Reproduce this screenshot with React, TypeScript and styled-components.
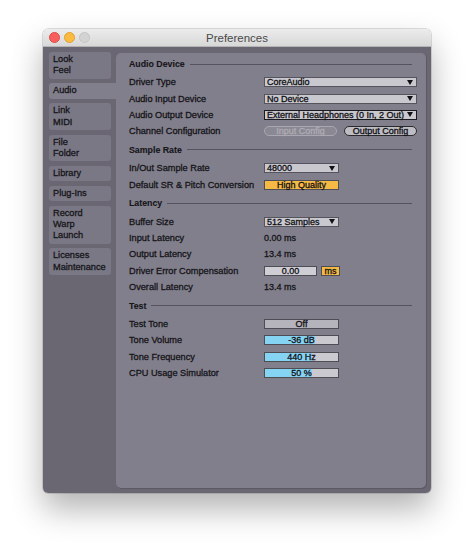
import React from "react";
import styled, { createGlobalStyle } from "styled-components";

const Global = createGlobalStyle`
  html, body { margin: 0; padding: 0; background: #ffffff; }
  body { width: 474px; height: 551px; overflow: hidden; font-family: "Liberation Sans", Arial, sans-serif; }
  * { box-sizing: border-box; }
`;

const Page = styled.div`
  padding: 29px 0 0 43px;
`;

const Window = styled.div`
  width: 388px;
  height: 464px;
  border-radius: 5px;
  overflow: hidden;
  display: flex;
  flex-direction: column;
  box-shadow: 0 16px 32px rgba(0, 0, 0, 0.3), 0 0 0 0.5px rgba(0, 0, 0, 0.25);
`;

const TitleBar = styled.div`
  height: 18px;
  flex: none;
  position: relative;
  display: flex;
  align-items: center;
  justify-content: center;
  background: linear-gradient(#ececec, #d8d8d8);
  border-bottom: 1px solid #b4b4b4;
`;

const Lights = styled.div`
  position: absolute;
  left: 6px;
  top: 3px;
  display: flex;
  gap: 4px;
`;

const Light = styled.span<{ $c: string; $b: string }>`
  width: 11px;
  height: 11px;
  border-radius: 50%;
  background: ${(p) => p.$c};
  border: 0.5px solid ${(p) => p.$b};
`;

const Title = styled.div`
  font-family: "Liberation Sans", Arial, sans-serif;
  font-size: 11.5px;
  color: #4a4a4a;
`;

const Body = styled.div`
  flex: 1;
  display: flex;
  padding: 5px 5px 5px 6px;
  background: #6a6772;
  -webkit-text-stroke: 0.3px;
`;

const Sidebar = styled.div`
  width: 62px;
  flex: none;
  display: flex;
  flex-direction: column;
  gap: 4.7px;
  margin-right: 5px;
`;

const Tab = styled.div<{ $active?: boolean }>`
  position: relative;
  z-index: 1;
  padding: 2px 4px;
  font-size: 9.2px;
  line-height: 11.3px;
  color: #16151a;
  background: ${(p) => (p.$active ? "#817f8b" : "#7a7884")};
  border-radius: ${(p) => (p.$active ? "3px 0 0 3px" : "3px")};
  margin-right: ${(p) => (p.$active ? "-7px" : "0")};
`;

const Panel = styled.div`
  flex: 1;
  margin-top: 1px;
  background: #817f8b;
  border-radius: 5px;
  box-shadow: 1px 1px 0 #5c5964;
  padding: 5px 9px 0 13px;
  display: flex;
  flex-direction: column;
`;

const Section = styled.div`
  display: flex;
  flex-direction: column;
  & + & {
    margin-top: 4.6px;
  }
`;

const Header = styled.div`
  height: 12px;
  display: flex;
  align-items: center;
  gap: 5px;
  margin-bottom: 4.2px;
  padding-right: 5px;
  font-size: 8.8px;
  font-weight: bold;
  color: #16151a;
  -webkit-text-stroke: 0.1px;
`;

const HeaderLine = styled.div`
  flex: 1;
  height: 1px;
  background: #56535e;
`;

const Row = styled.div`
  height: 16.3px;
  display: grid;
  grid-template-columns: 135px 1fr;
  align-items: center;
  font-size: 9.2px;
  color: #16151a;
`;

const Label = styled.div`
  white-space: nowrap;
`;

const Controls = styled.div`
  display: flex;
  align-items: center;
  gap: 4px;
`;

const Select = styled.div<{ $w: number; $focus?: boolean }>`
  width: ${(p) => p.$w}px;
  height: 10px;
  display: flex;
  align-items: center;
  justify-content: space-between;
  padding: 0 3px 0 2px;
  background: #c9c8ce;
  border: 1px solid ${(p) => (p.$focus ? "#1c1b20" : "#55535b")};
  font-size: 9px;
  line-height: 8px;
  color: #111014;
  white-space: nowrap;
`;

const Arrow = styled.span`
  width: 0;
  height: 0;
  border-left: 3.5px solid transparent;
  border-right: 3.5px solid transparent;
  border-top: 5px solid #111014;
`;

const Pill = styled.div<{ $disabled?: boolean }>`
  width: 73px;
  height: 10px;
  border-radius: 5px;
  display: flex;
  align-items: center;
  justify-content: center;
  font-size: 9px;
  background: ${(p) => (p.$disabled ? "#8a8893" : "#bebdc4")};
  border: 1px solid ${(p) => (p.$disabled ? "#a9a7b1" : "#2a292e")};
  color: ${(p) => (p.$disabled ? "#aeacb6" : "#111014")};
  & + & {
    margin-left: 3px;
  }
`;

const Box = styled.div<{ $w: number; $bg: string }>`
  width: ${(p) => p.$w}px;
  height: 10px;
  display: flex;
  align-items: center;
  justify-content: center;
  font-size: 9px;
  color: #111014;
  background: ${(p) => p.$bg};
  border: 1px solid #4e4c55;
`;

const Slider = styled.div`
  position: relative;
  width: 75px;
  height: 10px;
  background: #cac9cf;
  border: 1px solid #4e4c55;
  overflow: hidden;
`;

const Fill = styled.div`
  position: absolute;
  left: 0;
  top: 0;
  bottom: 0;
  background: #86d4f4;
`;

const SliderText = styled.div`
  position: relative;
  height: 100%;
  display: flex;
  align-items: center;
  justify-content: center;
  font-size: 9px;
  color: #111014;
`;

const Value = styled.div`
  font-size: 9px;
  color: #16151a;
`;

const tabs: { lines: string[]; active?: boolean }[] = [
  { lines: ["Look", "Feel"] },
  { lines: ["Audio"], active: true },
  { lines: ["Link", "MIDI"] },
  { lines: ["File", "Folder"] },
  { lines: ["Library"] },
  { lines: ["Plug-Ins"] },
  { lines: ["Record", "Warp", "Launch"] },
  { lines: ["Licenses", "Maintenance"] },
];

const Slide = ({ pct, text }: { pct: number; text: string }) => (
  <Slider>
    <Fill style={{ width: `${pct}%` }} />
    <SliderText>{text}</SliderText>
  </Slider>
);

export default function App() {
  return (
    <>
      <Global />
      <Page>
        <Window>
          <TitleBar>
            <Lights>
              <Light $c="#fc605c" $b="#de4a45" />
              <Light $c="#fdbc40" $b="#dea032" />
              <Light $c="#d3d3d3" $b="#c4c4c4" />
            </Lights>
            <Title>Preferences</Title>
          </TitleBar>
          <Body>
            <Sidebar>
              {tabs.map((t, i) => (
                <Tab key={i} $active={t.active}>
                  {t.lines.map((l) => (
                    <div key={l}>{l}</div>
                  ))}
                </Tab>
              ))}
            </Sidebar>
            <Panel>
              <Section>
                <Header>
                  Audio Device
                  <HeaderLine />
                </Header>
                <Row>
                  <Label>Driver Type</Label>
                  <Controls>
                    <Select $w={153}>
                      CoreAudio
                      <Arrow />
                    </Select>
                  </Controls>
                </Row>
                <Row>
                  <Label>Audio Input Device</Label>
                  <Controls>
                    <Select $w={153}>
                      No Device
                      <Arrow />
                    </Select>
                  </Controls>
                </Row>
                <Row>
                  <Label>Audio Output Device</Label>
                  <Controls>
                    <Select $w={153} $focus>
                      External Headphones (0 In, 2 Out)
                      <Arrow />
                    </Select>
                  </Controls>
                </Row>
                <Row>
                  <Label>Channel Configuration</Label>
                  <Controls>
                    <Pill $disabled>Input Config</Pill>
                    <Pill>Output Config</Pill>
                  </Controls>
                </Row>
              </Section>

              <Section>
                <Header>
                  Sample Rate
                  <HeaderLine />
                </Header>
                <Row>
                  <Label>In/Out Sample Rate</Label>
                  <Controls>
                    <Select $w={75}>
                      48000
                      <Arrow />
                    </Select>
                  </Controls>
                </Row>
                <Row>
                  <Label>Default SR &amp; Pitch Conversion</Label>
                  <Controls>
                    <Box $w={75} $bg="#f5b945">
                      High Quality
                    </Box>
                  </Controls>
                </Row>
              </Section>

              <Section>
                <Header>
                  Latency
                  <HeaderLine />
                </Header>
                <Row>
                  <Label>Buffer Size</Label>
                  <Controls>
                    <Select $w={75}>
                      512 Samples
                      <Arrow />
                    </Select>
                  </Controls>
                </Row>
                <Row>
                  <Label>Input Latency</Label>
                  <Value>0.00 ms</Value>
                </Row>
                <Row>
                  <Label>Output Latency</Label>
                  <Value>13.4 ms</Value>
                </Row>
                <Row>
                  <Label>Driver Error Compensation</Label>
                  <Controls>
                    <Box $w={53} $bg="#cfced4">
                      0.00
                    </Box>
                    <Box $w={19} $bg="#f5b945">
                      ms
                    </Box>
                  </Controls>
                </Row>
                <Row>
                  <Label>Overall Latency</Label>
                  <Value>13.4 ms</Value>
                </Row>
              </Section>

              <Section>
                <Header>
                  Test
                  <HeaderLine />
                </Header>
                <Row>
                  <Label>Test Tone</Label>
                  <Controls>
                    <Box $w={75} $bg="#b5b3bb">
                      Off
                    </Box>
                  </Controls>
                </Row>
                <Row>
                  <Label>Tone Volume</Label>
                  <Controls>
                    <Slide pct={68} text="-36 dB" />
                  </Controls>
                </Row>
                <Row>
                  <Label>Tone Frequency</Label>
                  <Controls>
                    <Slide pct={64} text="440 Hz" />
                  </Controls>
                </Row>
                <Row>
                  <Label>CPU Usage Simulator</Label>
                  <Controls>
                    <Slide pct={64} text="50 %" />
                  </Controls>
                </Row>
              </Section>
            </Panel>
          </Body>
        </Window>
      </Page>
    </>
  );
}
